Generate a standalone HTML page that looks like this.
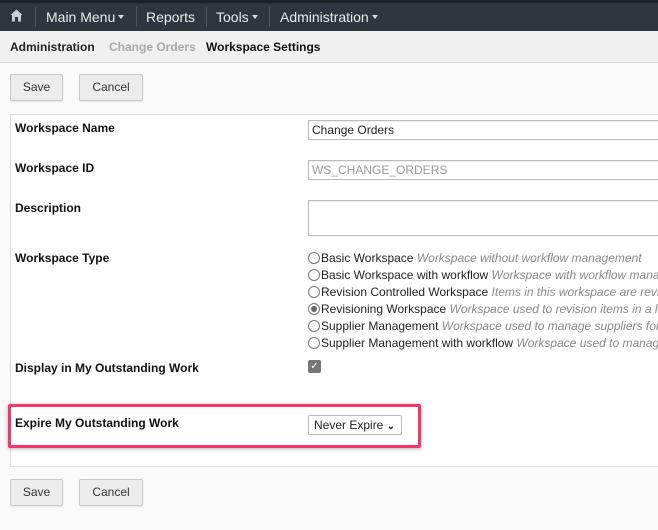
<!DOCTYPE html>
<html><head><style>
*{box-sizing:border-box;margin:0;padding:0}
html,body{width:658px;height:530px;overflow:hidden}
body{background:#fafafa;font-family:"Liberation Sans",Arial,sans-serif;font-size:12px;color:#222}
#w{position:relative;width:658px;height:530px;overflow:hidden}
.abs{position:absolute}
.top{left:0;top:0;width:658px;height:3px;background:#1b2026}
.nav{left:0;top:3px;width:658px;height:28px;background:#2e3740;color:#e8eaec;font-size:14px}
.nav span{position:absolute;top:6px}
.sep{position:absolute;top:4px;width:1px;height:20px;background:#4a545e}
.bc{left:0;top:31px;width:658px;height:32px;background:#f0f0f0;border-bottom:1px solid #d6d6d6;font-weight:bold;font-size:12px}
.bc span{position:absolute;top:9px}
.btn{position:absolute;height:27px;background:#ececec;border:1px solid #c8c8c8;border-radius:2px;font-size:12px;color:#333;text-align:center;line-height:25px;box-shadow:0 1px 1px rgba(0,0,0,.08)}
.panel{left:10px;top:114px;width:648px;height:353px;background:#fff;border:1px solid #ddd;border-right:none}
.lab{position:absolute;left:15px;font-weight:bold;font-size:12px;color:#111}
.inp{position:absolute;left:308px;width:350px;border:1px solid #bbb;border-right:none;background:#fff;font-size:12px;padding:2px 3px;box-shadow:inset 0 1px 1px rgba(0,0,0,.08);overflow:hidden;white-space:nowrap}
.r{position:absolute;left:308px;width:350px;overflow:hidden;font-size:12px;white-space:nowrap;color:#222}
.r i{color:#888}
.r b{display:inline-block;width:12px;height:12px;border:1px solid #777;border-radius:50%;vertical-align:-2px;margin-right:1px;font-weight:normal;position:relative;background:#fff}
.r b.on:after{content:"";position:absolute;left:2px;top:2px;width:6px;height:6px;border-radius:50%;background:#666}
.ar{display:inline-block;width:0;height:0;border-left:3px solid transparent;border-right:3px solid transparent;border-top:4px solid #d8dbde;vertical-align:3px;margin-left:3px}
</style></head><body><div id="w">
<div class="abs top"></div>
<div class="abs nav">
<svg style="position:absolute;left:10px;top:6px" width="13" height="13" viewBox="0 0 13 13"><path d="M6.5 0.5 L0.5 6 L2 6 L2 12.5 L11 12.5 L11 6 L12.5 6 Z" fill="#c9cdd1"/><rect x="5" y="8" width="3" height="4.5" fill="#2e3740"/></svg>
<div class="sep" style="left:35px"></div>
<span style="left:46px">Main Menu<i class="ar"></i></span>
<div class="sep" style="left:136px"></div>
<span style="left:146px">Reports</span>
<div class="sep" style="left:206px"></div>
<span style="left:216px">Tools<i class="ar"></i></span>
<div class="sep" style="left:269px"></div>
<span style="left:280px">Administration<i class="ar"></i></span>
</div>
<div class="abs bc">
<span style="left:10px;color:#222">Administration</span>
<span style="left:109px;color:#a8a8a8">Change Orders</span>
<span style="left:206px;color:#111">Workspace Settings</span>
</div>
<div class="btn" style="left:10px;top:74px;width:53px">Save</div>
<div class="btn" style="left:79px;top:74px;width:64px">Cancel</div>
<div class="abs panel"></div>
<div class="lab" style="top:121px">Workspace Name</div>
<div class="inp" style="top:120px;height:20px">Change Orders</div>
<div class="lab" style="top:161px">Workspace ID</div>
<div class="inp" style="top:160px;height:20px;color:#999">WS_CHANGE_ORDERS</div>
<div class="lab" style="top:201px">Description</div>
<div class="inp" style="top:200px;height:36px"></div>
<div class="lab" style="top:251px">Workspace Type</div>
<div class="r" style="top:251px"><b></b>Basic Workspace <i>Workspace without workflow management</i></div>
<div class="r" style="top:268px"><b></b>Basic Workspace with workflow <i>Workspace with workflow management</i></div>
<div class="r" style="top:285px"><b></b>Revision Controlled Workspace <i>Items in this workspace are revision controlled</i></div>
<div class="r" style="top:302px"><b class="on"></b>Revisioning Workspace <i>Workspace used to revision items in a library</i></div>
<div class="r" style="top:319px"><b></b>Supplier Management <i>Workspace used to manage suppliers for</i></div>
<div class="r" style="top:336px"><b></b>Supplier Management with workflow <i>Workspace used to manage</i></div>
<div class="lab" style="top:361px">Display in My Outstanding Work</div>
<div class="abs" style="left:308px;top:360px;width:13px;height:13px;background:#777;border-radius:2px;color:#fff;font-size:10px;line-height:13px;text-align:center">✓</div>
<div class="abs" style="left:8px;top:404px;width:413px;height:44px;border:3px solid #f0386b;border-radius:2px;box-shadow:0 1px 4px rgba(0,0,0,.3)"></div>
<div class="lab" style="top:416px">Expire My Outstanding Work</div>
<div class="abs" style="left:308px;top:415px;width:94px;height:20px;border:1px solid #bbb;border-radius:2px;background:#fff;font-size:12px;padding:2px 5px;color:#222;white-space:nowrap">Never Expire <span style="font-size:10px;font-weight:bold">⌄</span></div>
<div class="btn" style="left:10px;top:479px;width:53px">Save</div>
<div class="btn" style="left:79px;top:479px;width:64px">Cancel</div>
</div></body></html>
